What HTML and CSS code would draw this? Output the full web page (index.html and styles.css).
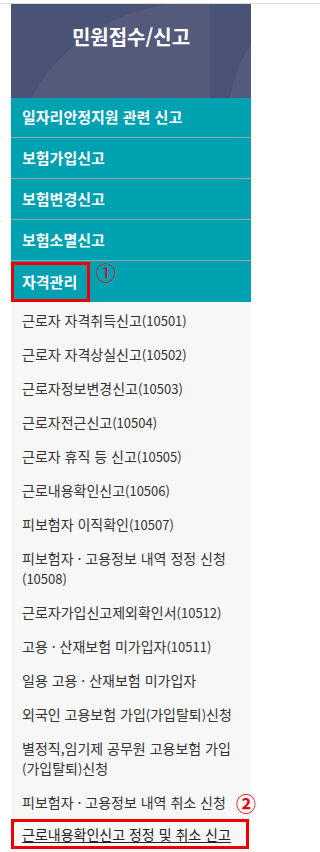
FILE: index.html
```html
<!DOCTYPE html>
<html lang="ko">
<head>
<meta charset="utf-8">
<title>민원접수/신고</title>
<link rel="stylesheet" href="styles.css">
</head>
<body>
<div class="page">
  <nav class="panel">
    <div class="panel-head">
      <h2 class="panel-title">민원접수/신고</h2>
    </div>
    <ul class="menu">
      <li class="menu-item">일자리안정지원 관련 신고</li>
      <li class="menu-item">보험가입신고</li>
      <li class="menu-item">보험변경신고</li>
      <li class="menu-item">보험소멸신고</li>
      <li class="menu-item menu-item--active">
        <span class="mark-box">자격관리</span>
        <span class="badge badge--one">①</span>
      </li>
    </ul>
    <ul class="sub">
      <li class="sub-item">근로자 자격취득신고<span class="code">(10501)</span></li>
      <li class="sub-item">근로자 자격상실신고<span class="code">(10502)</span></li>
      <li class="sub-item">근로자정보변경신고<span class="code">(10503)</span></li>
      <li class="sub-item">근로자전근신고<span class="code">(10504)</span></li>
      <li class="sub-item">근로자 휴직 등 신고<span class="code">(10505)</span></li>
      <li class="sub-item">근로내용확인신고<span class="code">(10506)</span></li>
      <li class="sub-item">피보험자 이직확인<span class="code">(10507)</span></li>
      <li class="sub-item">피보험자 · 고용정보 내역 정정 신청<wbr><span class="code">(10508)</span></li>
      <li class="sub-item">근로자가입신고제외확인서<span class="code">(10512)</span></li>
      <li class="sub-item">고용 · 산재보험 미가입자<span class="code">(10511)</span></li>
      <li class="sub-item">일용 고용 · 산재보험 미가입자</li>
      <li class="sub-item">외국인 고용보험 가입<span class="code">(</span>가입탈퇴<span class="code">)</span>신청</li>
      <li class="sub-item">별정직,임기제 공무원 고용보험 가입 <span class="code">(</span>가입탈퇴<span class="code">)</span>신청</li>
      <li class="sub-item sub-item--note">피보험자 · 고용정보 내역 취소 신청<span class="badge badge--two">②</span></li>
      <li class="sub-item sub-item--marked"><span class="link">근로내용확인신고 정정 및 취소 신고</span></li>
    </ul>
  </nav>
</div>
</body>
</html>
```

FILE: styles.css
```css
* { box-sizing: border-box; }
html, body { margin: 0; padding: 0; background: #fff; }
body {
  font-family: "Noto Sans CJK KR", "Noto Sans", sans-serif;
  color: #333;
}
.page {
  margin-top: 3px;
  border-top: 1px solid #dcdcdc;
  height: 849px;
  overflow: hidden;
}
.panel {
  width: 240px;
  margin-left: 11px;
  background: #f7f7f7;
  height: 100%;
}
.panel-head {
  height: 94px;
  background-color: #4a5275;
  background-image:
    radial-gradient(circle 181px at 179px 180px, #535a7c 99.5%, rgba(83,90,124,0) 100%),
    radial-gradient(circle 122px at 340px 110px, #535a7c 99.5%, rgba(83,90,124,0) 100%);
  background-size: 199px 100%, 100% 100%;
  background-repeat: no-repeat;
  padding-top: 19px;
  text-align: center;
}
.panel-title {
  margin: 0;
  font-size: 20px;
  line-height: 28px;
  font-weight: 700;
  color: #fff;
}
.menu, .sub {
  list-style: none;
  margin: 0;
  padding: 0;
}
.menu-item {
  background: #00a1b1;
  color: #fff;
  font-size: 15px;
  font-weight: 700;
  height: 41px;
  line-height: 40px;
  padding-left: 11px;
  border-bottom: 1px solid #a3a3a3;
}
.menu-item:first-child { height: 40px; line-height: 38px; }
.menu-item--active {
  position: relative;
  border-bottom: 0;
  padding-left: 0;
  height: 41px;
  padding-top: 1px;
}
.mark-box {
  display: inline-block;
  height: 40px;
  line-height: 34px;
  border: 3px solid #ee0000;
  padding: 0 10px 0 8px;
}
.badge {
  position: absolute;
  color: #e60012;
  font-weight: 400;
  line-height: 1;
}
.badge--one {
  left: 85px;
  top: 2px;
  font-size: 20px;
}
.sub {
  padding-top: 1px;
}
.sub-item {
  font-size: 14px;
  line-height: 20px;
  padding: 7px 11px;
  color: #333;
  word-break: keep-all;
}
.code {
  font-size: 13px;
  line-height: 1;
}
.sub-item--note { position: relative; }
.badge--two {
  left: 225px;
  top: 9px;
  font-size: 20px;
  font-weight: 700;
}
.sub-item--marked {
  border: 3px solid #ee0000;
  padding: 2px 8px;
  margin-right: 2px;
  white-space: nowrap;
}
.link {
  text-decoration: underline;
  text-underline-offset: 2px;
  color: #222;
}
```
